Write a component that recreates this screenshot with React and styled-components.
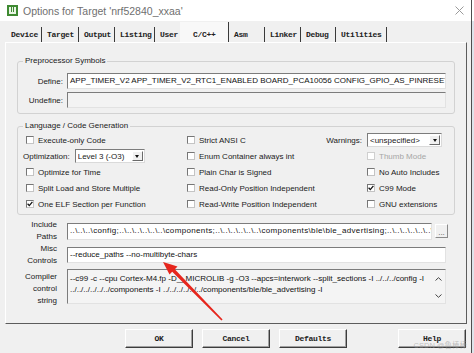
import React from "react";
import styled, { createGlobalStyle } from "styled-components";

const UI_FONT = `"Liberation Sans", Arial, sans-serif`;
const MONO_FONT = `"Liberation Mono", "Courier New", monospace`;
const CJK_FONT = `"Liberation Sans", "Noto Sans CJK SC", sans-serif`;

const GlobalStyle = createGlobalStyle`
  html, body {
    margin: 0;
    padding: 0;
    background: #f0f0f0;
  }
  * {
    box-sizing: border-box;
  }
`;

const Screen = styled.div`
  display: flex;
  width: 474px;
  height: 353px;
  overflow: hidden;
  font-family: ${UI_FONT};
  font-size: 8px;
  color: #1a1a1a;
`;

const Window = styled.div`
  position: relative;
  width: 471px;
  height: 353px;
  flex-shrink: 0;
  display: flex;
  flex-direction: column;
  background: #f0f0f0;
`;

const Backdrop = styled.div`
  flex: 1;
  border-left: 1px solid #4e4e4e;
  background: linear-gradient(#ffffff 0 21px, #dde3ea 21px);
`;

const TitleBar = styled.div`
  height: 21px;
  flex-shrink: 0;
  display: flex;
  align-items: center;
  gap: 5px;
  padding: 0 7px;
  background: #fff;
`;

const TitleText = styled.span`
  flex: 1;
  font-size: 10.5px;
  color: #6f6f6f;
  white-space: nowrap;
`;

const TabStrip = styled.div`
  height: 21px;
  flex-shrink: 0;
  display: flex;
  align-items: flex-end;
  padding-left: 6px;
`;

const Tab = styled.div`
  width: ${(p) => p.$width}px;
  height: ${(p) => (p.$active ? 20 : 15)}px;
  padding: ${(p) => (p.$active ? "5px 0 0 13px" : "0 0 0 5px")};
  line-height: 15px;
  font-family: ${MONO_FONT};
  font-size: 8px;
  font-weight: bold;
  letter-spacing: -0.3px;
  color: #222;
  white-space: nowrap;
  border-right: 1px solid ${(p) => (p.$sep ? "#3a3a3a" : "transparent")};
  background: ${(p) => (p.$active ? "#f8f8f8" : "transparent")};
`;

const TabPanel = styled.div`
  margin-left: 5px;
  width: 462px;
  height: 282px;
  flex-shrink: 0;
  padding: 13px 11px 0 11px;
  border: 1px solid;
  border-color: #ffffff #5c5c5c #5c5c5c #ffffff;
`;

const Group = styled.fieldset`
  margin: ${(p) => p.$gap || 0}px 0 0;
  padding: ${(p) => p.$pad};
  min-width: 0;
  border: 1px solid #d2d2d2;
  border-radius: 3px;
`;

const GroupTitle = styled.legend`
  padding: 0 2px;
  font-size: 8px;
  line-height: 10px;
`;

const SymbolGrid = styled.div`
  display: grid;
  grid-template-columns: 40px 1fr;
  grid-auto-rows: 16px;
  column-gap: 4px;
  row-gap: 3px;
  align-items: center;
`;

const FieldLabel = styled.span`
  text-align: right;
  white-space: nowrap;
`;

const TextBox = styled.div`
  height: ${(p) => p.$height || 16}px;
  min-width: 0;
  padding: 0 2px;
  margin-right: ${(p) => p.$trim || 0}px;
  line-height: 14px;
  letter-spacing: ${(p) => p.$spacing || 0}px;
  white-space: nowrap;
  overflow: hidden;
  background: ${(p) => (p.$muted ? "#f3f3f3" : "#fff")};
  border: 1px solid;
  border-color: #7c7c7c #e2e2e2 #e2e2e2 #7c7c7c;
  color: #111;
`;

const OptionsGrid = styled.div`
  display: grid;
  grid-template-columns: 164px 139px 1fr;
  grid-auto-rows: 16px;
  align-items: center;
`;

const CheckItem = styled.div`
  display: flex;
  align-items: center;
  gap: 4px;
  padding-left: ${(p) => p.$indent || 0}px;
  white-space: nowrap;
  color: ${(p) => (p.$disabled ? "#a6a6a6" : "inherit")};
`;

const Box = styled.span`
  width: 8px;
  height: 8px;
  flex-shrink: 0;
  display: flex;
  align-items: center;
  justify-content: center;
  background: #fff;
  border: 1px solid;
  border-color: ${(p) =>
    p.$disabled ? "#cfcfcf" : "#767676 #c4c4c4 #c4c4c4 #767676"};
`;

const FieldRow = styled.div`
  display: flex;
  align-items: center;
  gap: 5px;
`;

const InlineLabel = styled.span`
  width: ${(p) => p.$width}px;
  text-align: right;
  white-space: nowrap;
`;

const Select = styled.div`
  width: ${(p) => p.$width}px;
  height: 14px;
  display: flex;
  align-items: center;
  padding: 0 1px 0 2px;
  background: #fff;
  border: 1px solid;
  border-color: #7c7c7c #dadada #dadada #7c7c7c;
`;

const SelectValue = styled.span`
  flex: 1;
  white-space: nowrap;
  overflow: hidden;
`;

const SelectButton = styled.span`
  width: 11px;
  height: 10px;
  display: flex;
  align-items: center;
  justify-content: center;
  background: #f0f0f0;
  border: 1px solid;
  border-color: #ffffff #6a6a6a #6a6a6a #ffffff;

  &::after {
    content: "";
    border-left: 2.5px solid transparent;
    border-right: 2.5px solid transparent;
    border-top: 3px solid #111;
  }
`;

const ControlsGrid = styled.div`
  margin-top: 4px;
  display: grid;
  grid-template-columns: 40px 1fr;
  grid-template-rows: 24px 24px 38px;
  column-gap: 10px;
  align-items: center;
  padding-right: 7px;
`;

const RowLabel = styled.div`
  text-align: right;
  line-height: 12px;
  align-self: ${(p) => (p.$top ? "start" : "center")};
  padding-top: ${(p) => (p.$top ? 4 : 0)}px;
`;

const PathRow = styled.div`
  display: flex;
  align-items: center;
  gap: 3px;
  min-width: 0;
`;

const BrowseButton = styled.div`
  width: 13px;
  height: 14px;
  flex-shrink: 0;
  display: flex;
  align-items: flex-end;
  justify-content: center;
  line-height: 9px;
  color: #555;
  background: #f0f0f0;
  border: 1px solid;
  border-color: #ffffff #8a8a8a #8a8a8a #ffffff;
`;

const CommandBox = styled.div`
  height: 35px;
  margin: 2px 2px 0 0;
  align-self: start;
  display: flex;
  background: #f4f4f4;
  border: 1px solid;
  border-color: #7c7c7c #e2e2e2 #e2e2e2 #7c7c7c;
`;

const CommandText = styled.div`
  flex: 1;
  padding: 3px 2px 0;
  line-height: 11px;
  white-space: nowrap;
  overflow: hidden;
  color: #111;
`;

const ScrollArrows = styled.div`
  width: 14px;
  display: flex;
  flex-direction: column;
  align-items: center;
  justify-content: space-between;
  padding: 7px 0 5px;
`;

const ButtonBar = styled.div`
  display: flex;
  gap: 9px;
  padding: 5px 5px 0 125px;
`;

const DialogButton = styled.div`
  width: 68px;
  height: 19px;
  margin-left: ${(p) => (p.$push ? "auto" : 0)};
  display: flex;
  align-items: center;
  justify-content: center;
  font-family: ${MONO_FONT};
  font-size: 8px;
  font-weight: bold;
  letter-spacing: -0.3px;
  color: #222;
  background: #f0f0f0;
  border: 1px solid;
  border-color: #ffffff #3c3c3c #3c3c3c #ffffff;
  box-shadow: inset -1px -1px 0 #a0a0a0;
`;

const Annotation = styled.svg`
  position: absolute;
  left: 0;
  top: 0;
  pointer-events: none;
`;

const Watermark = styled.span`
  position: absolute;
  right: 4px;
  bottom: 3px;
  font-family: ${CJK_FONT};
  font-size: 7.5px;
  color: rgba(150, 150, 150, 0.55);
`;

const tabs = [
  { name: "Device", width: 36 },
  { name: "Target", width: 37 },
  { name: "Output", width: 36 },
  { name: "Listing", width: 40 },
  { name: "User", width: 25 },
  { name: "C/C++", width: 49, active: true },
  { name: "Asm", width: 36 },
  { name: "Linker", width: 36 },
  { name: "Debug", width: 35 },
  { name: "Utilities", width: 51 },
];

const rows = [
  {
    left: { label: "Execute-only Code" },
    mid: { label: "Strict ANSI C" },
  },
  {
    mid: { label: "Enum Container always int" },
    right: { label: "Thumb Mode", disabled: true },
  },
  {
    left: { label: "Optimize for Time" },
    mid: { label: "Plain Char is Signed" },
    right: { label: "No Auto Includes" },
  },
  {
    left: { label: "Split Load and Store Multiple" },
    mid: { label: "Read-Only Position Independent" },
    right: { label: "C99 Mode", checked: true },
  },
  {
    left: { label: "One ELF Section per Function", checked: true },
    mid: { label: "Read-Write Position Independent" },
    right: { label: "GNU extensions" },
  },
];

function Check({ label, checked, disabled, indent }) {
  return (
    <CheckItem $indent={indent} $disabled={disabled}>
      <Box $disabled={disabled}>
        {checked && (
          <svg width="6" height="6" viewBox="0 0 6 6">
            <path d="M0.6 2.8 L2.3 4.6 L5.4 0.9" fill="none" stroke="#111" strokeWidth="1.3" />
          </svg>
        )}
      </Box>
      {label}
    </CheckItem>
  );
}

function Chevron({ down }) {
  return (
    <svg width="7" height="4" viewBox="0 0 7 4">
      <path
        d={down ? "M0.5 0.5 L3.5 3.3 L6.5 0.5" : "M0.5 3.5 L3.5 0.7 L6.5 3.5"}
        fill="none"
        stroke="#444"
        strokeWidth="1"
      />
    </svg>
  );
}

export default function App() {
  return (
    <Screen>
      <GlobalStyle />
      <Window>
        <TitleBar>
          <svg width="11" height="11" viewBox="0 0 11 11">
            <rect width="11" height="11" fill="#3f8a32" />
            <path d="M2 2 H4 V7 H5 V2 H6 V7 H7 V2 H9 V9 H2 Z" fill="#e9f5e4" />
          </svg>
          <TitleText>Options for Target 'nrf52840_xxaa'</TitleText>
          <svg width="9" height="9" viewBox="0 0 9 9">
            <path d="M0.5 0.5 L8.5 8.5 M8.5 0.5 L0.5 8.5" stroke="#9a9a9a" strokeWidth="1" />
          </svg>
        </TitleBar>

        <TabStrip>
          {tabs.map((t, i) => (
            <Tab
              key={t.name}
              $width={t.width}
              $active={t.active}
              $sep={!(tabs[i + 1] && tabs[i + 1].active)}
            >
              {t.name}
            </Tab>
          ))}
        </TabStrip>

        <TabPanel>
          <Group $pad="7px 8px 5px 5px">
            <GroupTitle>Preprocessor Symbols</GroupTitle>
            <SymbolGrid>
              <FieldLabel>Define:</FieldLabel>
              <TextBox>
                APP_TIMER_V2 APP_TIMER_V2_RTC1_ENABLED BOARD_PCA10056 CONFIG_GPIO_AS_PINRESET FLOAT_ABI_HARD NRF52840_XXAA
              </TextBox>
              <FieldLabel>Undefine:</FieldLabel>
              <TextBox $muted />
            </SymbolGrid>
          </Group>

          <Group $gap={7} $pad="1px 4px 2px 5px">
            <GroupTitle>Language / Code Generation</GroupTitle>
            <OptionsGrid>
              {rows.map((r, i) => (
                <React.Fragment key={i}>
                  {i === 1 ? (
                    <FieldRow>
                      <span>Optimization:</span>
                      <Select $width={70}>
                        <SelectValue>Level 3 (-O3)</SelectValue>
                        <SelectButton />
                      </Select>
                    </FieldRow>
                  ) : (
                    <Check {...r.left} indent={3} />
                  )}
                  <Check {...r.mid} />
                  {i === 0 ? (
                    <FieldRow>
                      <InlineLabel $width={36}>Warnings:</InlineLabel>
                      <Select $width={75}>
                        <SelectValue>&lt;unspecified&gt;</SelectValue>
                        <SelectButton />
                      </Select>
                    </FieldRow>
                  ) : (
                    <Check {...r.right} indent={41} />
                  )}
                </React.Fragment>
              ))}
            </OptionsGrid>
          </Group>

          <ControlsGrid>
            <RowLabel>
              Include
              <br />
              Paths
            </RowLabel>
            <PathRow>
              <TextBox $height={17} $spacing={0.35} style={{ flex: 1 }}>
                ..\..\..\config;..\..\..\..\..\..\components;..\..\..\..\..\..\components\ble\ble_advertising;..\..\..\..\..\..\components\ble\common
              </TextBox>
              <BrowseButton>...</BrowseButton>
            </PathRow>

            <RowLabel>
              Misc
              <br />
              Controls
            </RowLabel>
            <TextBox $trim={2}>--reduce_paths --no-multibyte-chars</TextBox>

            <RowLabel $top>
              Compiler
              <br />
              control
              <br />
              string
            </RowLabel>
            <CommandBox>
              <CommandText>
                <div>
                  --c99 -c --cpu Cortex-M4.fp -D__MICROLIB -g -O3 --apcs=interwork --split_sections -I ../../../config -I
                </div>
                <div>
                  ../../../../../../components -I ../../../../../../components/ble/ble_advertising -I
                </div>
              </CommandText>
              <ScrollArrows>
                <Chevron />
                <Chevron down />
              </ScrollArrows>
            </CommandBox>
          </ControlsGrid>
        </TabPanel>

        <ButtonBar>
          <DialogButton>OK</DialogButton>
          <DialogButton>Cancel</DialogButton>
          <DialogButton>Defaults</DialogButton>
          <DialogButton $push>Help</DialogButton>
        </ButtonBar>

        <Annotation width="471" height="353" viewBox="0 0 471 353">
          <polygon
            points="163,262 177.5,266.5 174.8,269.2 222.6,319.5 221.4,320.5 172.2,271.8 169.5,274.5"
            fill="#e6261d"
          />
        </Annotation>
        <Watermark>CSDN @鲁棒棒</Watermark>
      </Window>
      <Backdrop />
    </Screen>
  );
}
